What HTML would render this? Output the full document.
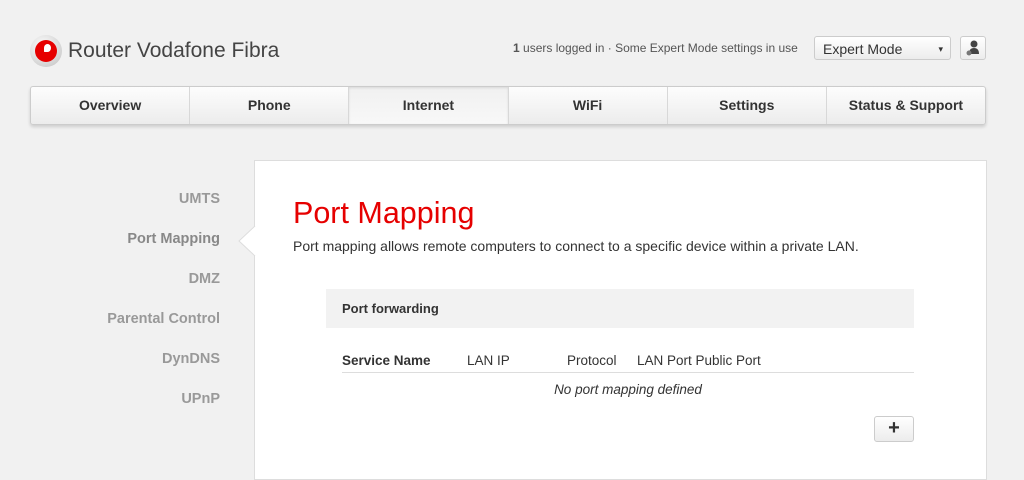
<!DOCTYPE html>
<html><head><style>
body{margin:0;width:1024px;height:470px;overflow:hidden;background:#f1f1f1;font-family:"Liberation Sans",Arial,sans-serif;position:relative;color:#333}
.a{position:absolute}
.logo{left:30px;top:35px;width:32px;height:32px;border-radius:50%;background:radial-gradient(circle at 40% 35%,#fff,#ccc 80%,#aaa);}
.logo i{position:absolute;left:5px;top:5px;width:22px;height:22px;border-radius:50%;background:#e60000}
.logo b{position:absolute;left:14px;top:9px;width:7px;height:8px;border-radius:50% 50% 50% 10%;background:#fff}
.title{left:68px;top:39px;font-size:21px;color:#444}
.top{left:513px;top:41px;font-size:12px;color:#555}
.sel{left:814px;top:36px;width:137px;height:24px;border:1px solid #ccc;border-radius:3px;background:linear-gradient(#fff,#ececec);font-size:14px;line-height:24px;box-sizing:border-box;padding-left:8px;color:#333}
.usr{left:960px;top:36px;width:26px;height:24px;border:1px solid #ccc;border-radius:3px;background:linear-gradient(#fff,#ececec);box-sizing:border-box}
.nav{left:30px;top:86px;width:956px;height:39px;border:1px solid #ccc;border-radius:3px;background:linear-gradient(#fdfdfd,#ececec);box-shadow:0 2px 3px rgba(0,0,0,.15);display:flex;box-sizing:border-box}
.nav div{flex:1;text-align:center;font-weight:bold;font-size:14px;line-height:37px;color:#333;border-left:1px solid #d8d8d8}
.nav div:first-child{border-left:0}
.nav .act{background:linear-gradient(#f0f0f0,#f8f8f8);box-shadow:inset 0 1px 2px rgba(0,0,0,.1)}
.side{right:804px;font-size:14.5px;font-weight:bold;color:#999;text-align:right}
.panel{left:254px;top:160px;width:733px;height:320px;background:#fff;border:1px solid #ddd;box-sizing:border-box}
.h1{left:293px;top:196px;font-size:30.5px;color:#e60000}
.desc{left:293px;top:238px;font-size:14px;color:#333}
.pf{left:326px;top:289px;width:588px;height:39px;background:#f2f2f2;font-size:13px;font-weight:bold;line-height:39px;box-sizing:border-box;padding-left:16px}
.th{top:353px;font-size:13.5px;color:#333}
.plus{left:874px;top:416px;width:40px;height:26px;border:1px solid #ccc;border-radius:3px;background:linear-gradient(#fff,#ececec);box-sizing:border-box;text-align:center;font-size:20px;font-weight:bold;line-height:23px}
</style></head><body>
<div class="a logo"><i></i><b></b></div>
<div class="a title">Router Vodafone Fibra</div>
<div class="a top"><b>1</b> users logged in · Some Expert Mode settings in use</div>
<div class="a sel">Expert Mode<span style="position:absolute;right:7px;font-size:9px">▾</span></div>
<div class="a usr"><svg width="24" height="22" viewBox="0 0 24 22"><circle cx="13" cy="7" r="3.5" fill="#444"/><path d="M8 17 Q8 11 13 11 Q18 11 18 17Z" fill="#444"/><circle cx="8" cy="16" r="2.5" fill="#777"/></svg></div>
<div class="a nav"><div>Overview</div><div>Phone</div><div class="act">Internet</div><div>WiFi</div><div>Settings</div><div>Status &amp; Support</div></div>
<div class="a side" style="top:191px">UMTS</div>
<div class="a side" style="top:231px;color:#888">Port Mapping</div>
<div class="a side" style="top:271px">DMZ</div>
<div class="a side" style="top:311px">Parental Control</div>
<div class="a side" style="top:351px">DynDNS</div>
<div class="a side" style="top:391px">UPnP</div>
<div class="a panel"></div>
<svg class="a" style="left:237px;top:226px" width="19" height="30"><path d="M18 0 L18 0 L2 15 L18 30" fill="#fff" stroke="#ddd"/><rect x="17.5" y="1" width="2" height="28" fill="#fff"/></svg>
<div class="a h1">Port Mapping</div>
<div class="a desc">Port mapping allows remote computers to connect to a specific device within a private LAN.</div>
<div class="a pf">Port forwarding</div>
<div class="a th" style="left:342px;font-weight:bold">Service Name</div>
<div class="a th" style="left:467px">LAN IP</div>
<div class="a th" style="left:567px">Protocol</div>
<div class="a th" style="left:637px">LAN Port Public Port</div>
<div class="a" style="left:342px;top:372px;width:572px;height:1px;background:#ddd"></div>
<div class="a" style="left:342px;width:572px;top:382px;text-align:center;font-size:13.5px;font-style:italic">No port mapping defined</div>
<div class="a plus">+</div>
</body></html>
